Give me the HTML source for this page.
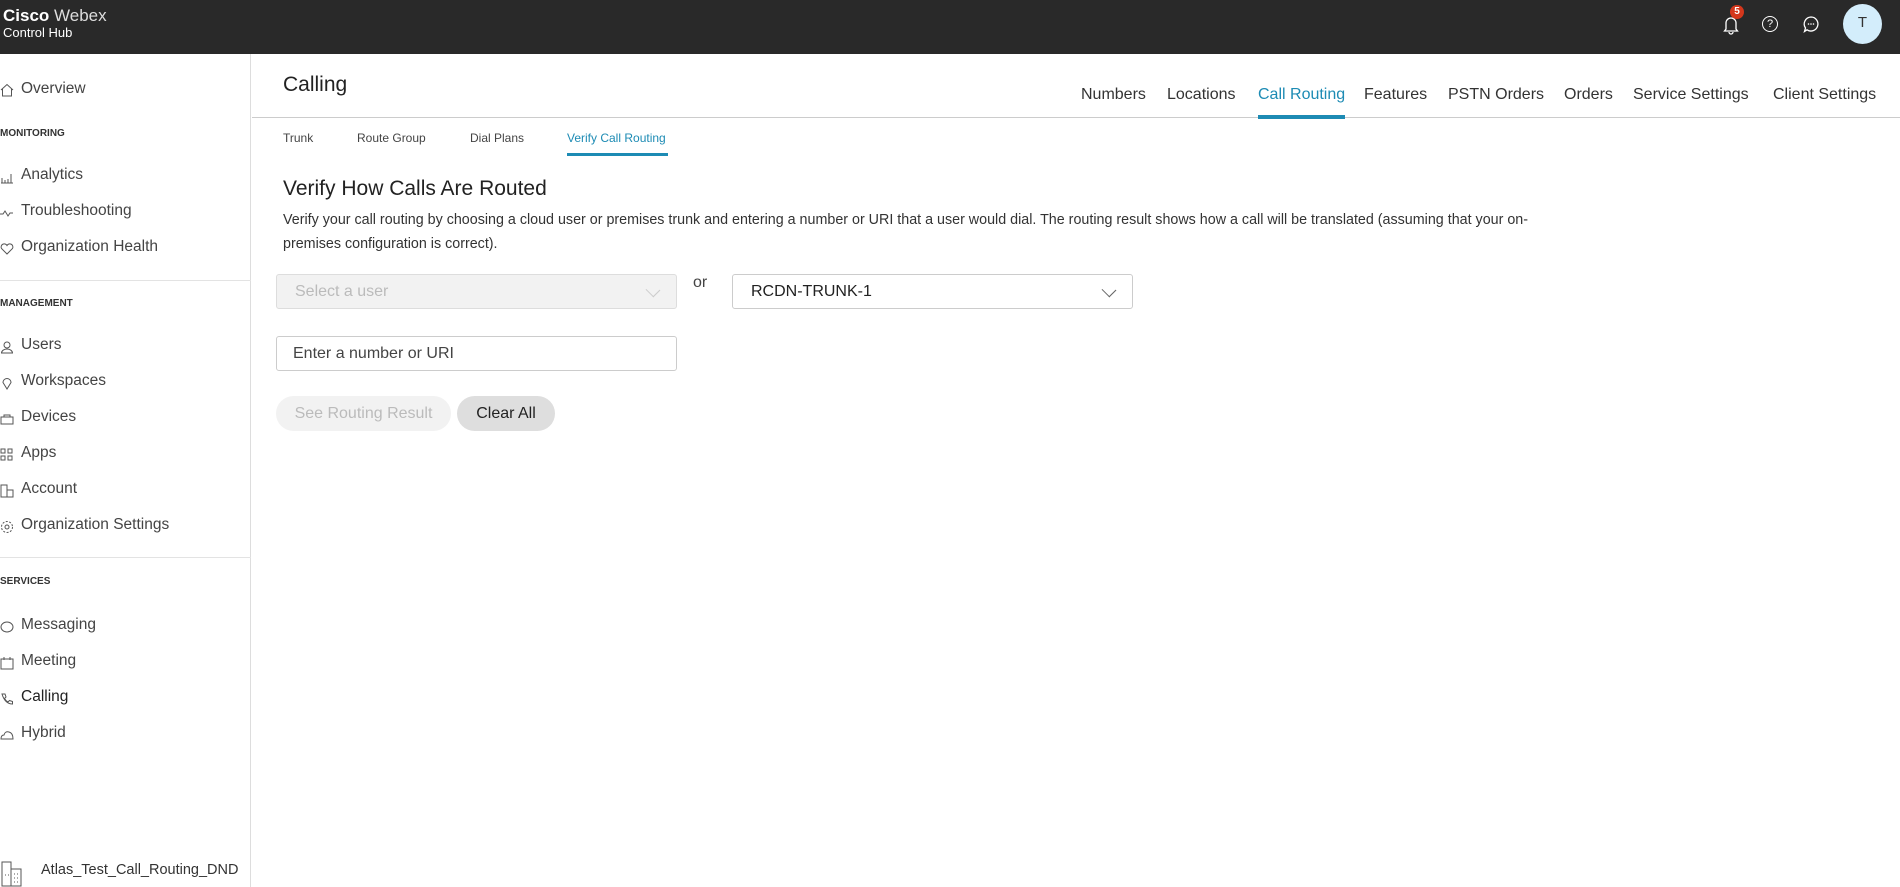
<!DOCTYPE html>
<html><head><meta charset="utf-8"><style>
*{margin:0;padding:0;box-sizing:border-box}
body{width:1900px;height:887px;overflow:hidden;background:#fff;font-family:"Liberation Sans",sans-serif;color:#333;position:relative}
.a{position:absolute;white-space:nowrap}
.hdr{position:absolute;left:0;top:0;width:1900px;height:54px;background:#292929}
.side{position:absolute;left:0;top:54px;width:251px;height:833px;border-right:1px solid #ddd}
.si{position:absolute;left:21px;font-size:15.5px;color:#444}
.ic{position:absolute;left:0;width:14px;height:14px}
.sec{position:absolute;left:0;font-size:10px;font-weight:bold;color:#333}
.hr{position:absolute;left:0;width:251px;border-top:1px solid #e3e3e3}
.nav{position:absolute;top:86px;font-size:16px;color:#333}
.sub{position:absolute;top:131px;font-size:12px;color:#444}
.box{position:absolute;border:1px solid #ccc;border-radius:3px;height:35px}
.chev{position:absolute;right:18px;top:10px;width:10px;height:10px;border-right:1.5px solid #666;border-bottom:1.5px solid #666;transform:rotate(45deg) scaleX(1.1)}
</style></head><body>
<div class="hdr">
 <div class="a" style="left:3px;top:6px;color:#fff;font-size:17px"><b>Cisco</b> <span style="font-weight:300;color:#ddd">Webex</span></div>
 <div class="a" style="left:3px;top:25px;color:#fff;font-size:13px">Control Hub</div>
 <svg class="a" style="left:1722px;top:14px" width="18" height="22" viewBox="0 0 18 22"><path d="M4 15 V9 a5 5 0 0 1 10 0 V15 L15.5 17 H2.5 Z M7 18 a2 2 0 0 0 4 0" fill="none" stroke="#fff" stroke-width="1.3"/></svg>
 <div class="a" style="left:1730px;top:5px;width:14px;height:14px;border-radius:7px;background:#d4371c;color:#fff;font-size:10px;font-weight:bold;text-align:center;line-height:14px">5</div>
 <div class="a" style="left:1762px;top:16px;width:16px;height:16px;border:1.4px solid #fff;border-radius:50%;color:#fff;font-size:11px;text-align:center;line-height:14px">?</div>
 <svg class="a" style="left:1802px;top:15px" width="18" height="19" viewBox="0 0 18 19"><path d="M9 2 a7 7 0 1 1 -4 12.8 L2.5 16.5 L3.5 13 A7 7 0 0 1 9 2 Z" fill="none" stroke="#fff" stroke-width="1.3"/><circle cx="6.5" cy="9" r=".8" fill="#fff"/><circle cx="9" cy="9" r=".8" fill="#fff"/><circle cx="11.5" cy="9" r=".8" fill="#fff"/></svg>
 <div class="a" style="left:1843px;top:4px;width:39px;height:40px;border-radius:50%;background:#d3edfb;color:#333;font-size:15px;text-align:center;line-height:38px">T</div>
</div>
<div class="side">
 <div class="si" style="top:26px">Overview</div>
 <svg class="ic" style="top:29px" viewBox="0 0 14 14"><path d="M1 7 L7 1.5 L13 7 M2.5 6 V13 H11.5 V6" fill="none" stroke="#555"/></svg>
 <div class="sec" style="top:74px">MONITORING</div>
 <div class="si" style="top:112px">Analytics</div>
 <svg class="ic" style="top:116px" viewBox="0 0 14 14"><path d="M1 13 H13 M2 13 V8 M5 13 V10 M8 13 V9 M11 13 V4" fill="none" stroke="#555"/></svg>
 <div class="si" style="top:148px">Troubleshooting</div>
 <svg class="ic" style="top:152px" viewBox="0 0 14 14"><path d="M0 8 L3 8 L5 5 L8 10 L10 7 L13 7" fill="none" stroke="#555"/></svg>
 <div class="si" style="top:184px">Organization Health</div>
 <svg class="ic" style="top:188px" viewBox="0 0 14 14"><path d="M7 12 L1.5 6.5 A3 3 0 0 1 7 3.5 A3 3 0 0 1 12.5 6.5 Z" fill="none" stroke="#555"/></svg>
 <div class="hr" style="top:226px"></div>
 <div class="sec" style="top:244px">MANAGEMENT</div>
 <div class="si" style="top:282px">Users</div>
 <svg class="ic" style="top:286px" viewBox="0 0 14 14"><circle cx="7" cy="5" r="3" fill="none" stroke="#555"/><path d="M1.5 13 A5.5 4 0 0 1 12.5 13 Z" fill="none" stroke="#555"/></svg>
 <div class="si" style="top:318px">Workspaces</div>
 <svg class="ic" style="top:322px" viewBox="0 0 14 14"><path d="M7 13 L3 6.5 A4 4 0 1 1 11 6.5 Z" fill="none" stroke="#555"/></svg>
 <div class="si" style="top:354px">Devices</div>
 <svg class="ic" style="top:358px" viewBox="0 0 14 14"><path d="M1 5 H13 V12 H1 Z M4 5 V3 H10 V5" fill="none" stroke="#555"/></svg>
 <div class="si" style="top:390px">Apps</div>
 <svg class="ic" style="top:394px" viewBox="0 0 14 14"><path d="M1 1 h4 v4 h-4 z M8 1 h4 v4 h-4 z M1 8 h4 v4 h-4 z M8 8 h4 v4 h-4 z" fill="none" stroke="#555"/></svg>
 <div class="si" style="top:426px">Account</div>
 <svg class="ic" style="top:430px" viewBox="0 0 14 14"><path d="M1 1 H7 V13 H1 Z M7 6 H13 V13 H7" fill="none" stroke="#555"/></svg>
 <div class="si" style="top:462px">Organization Settings</div>
 <svg class="ic" style="top:466px" viewBox="0 0 14 14"><circle cx="7" cy="7" r="5.5" fill="none" stroke="#555" stroke-dasharray="2 1.5"/><circle cx="7" cy="7" r="2" fill="none" stroke="#555"/></svg>
 <div class="hr" style="top:503px"></div>
 <div class="sec" style="top:522px">SERVICES</div>
 <div class="si" style="top:562px">Messaging</div>
 <svg class="ic" style="top:566px" viewBox="0 0 14 14"><ellipse cx="7" cy="7" rx="6" ry="5" fill="none" stroke="#555"/></svg>
 <div class="si" style="top:598px">Meeting</div>
 <svg class="ic" style="top:602px" viewBox="0 0 14 14"><path d="M1 3 H13 V13 H1 Z M4 1 V4 M10 1 V4" fill="none" stroke="#555"/></svg>
 <div class="si" style="top:634px;color:#222">Calling</div>
 <svg class="ic" style="top:638px" viewBox="0 0 14 14"><path d="M2 2 L5 2 L6 5 L4.5 6.5 Q6 9 8 10 L9.5 8.5 L12.5 9.5 L12.5 12 Q5 12 2 2 Z" fill="none" stroke="#555"/></svg>
 <div class="si" style="top:670px">Hybrid</div>
 <svg class="ic" style="top:674px" viewBox="0 0 14 14"><path d="M1 11 Q1 7 4 7 Q5 3 9 4 Q13 5 13 11 Z" fill="none" stroke="#555"/></svg>
 <svg class="ic" style="top:807px;width:22px;height:26px" viewBox="0 0 22 26"><path d="M2 1 H11 V25 H2 Z M11 8 H21 V25 H11 M5 14 h1 M8 14 h1 M14 13 h1 M17 13 h1 M14 17 h1 M17 17 h1 M14 21 h1 M17 21 h1" fill="none" stroke="#555"/></svg>
 <div class="si" style="top:808px;left:41px;color:#333;font-size:14.5px">Atlas_Test_Call_Routing_DND</div>
</div>
<div class="a" style="left:283px;top:73px;font-size:21px;color:#222">Calling</div>
<div class="nav" style="left:1081px">Numbers</div>
<div class="nav" style="left:1167px">Locations</div>
<div class="nav" style="left:1258px;color:#1d8bb4">Call Routing</div>
<div class="nav" style="left:1364px">Features</div>
<div class="nav" style="left:1448px">PSTN Orders</div>
<div class="nav" style="left:1564px">Orders</div>
<div class="nav" style="left:1633px">Service Settings</div>
<div class="nav" style="left:1773px">Client Settings</div>
<div class="a" style="left:252px;top:117px;width:1648px;border-top:1px solid #ccc"></div>
<div class="a" style="left:1258px;top:115px;width:87px;height:4px;background:#1d8bb4"></div>
<div class="sub" style="left:283px">Trunk</div>
<div class="sub" style="left:357px">Route Group</div>
<div class="sub" style="left:470px">Dial Plans</div>
<div class="sub" style="left:567px;color:#1d8bb4">Verify Call Routing</div>
<div class="a" style="left:567px;top:153px;width:101px;height:3px;background:#1d8bb4"></div>
<div class="a" style="left:283px;top:177px;font-size:21px;color:#222">Verify How Calls Are Routed</div>
<div class="a" style="left:283px;top:208px;font-size:14.3px;line-height:24px;color:#333">Verify your call routing by choosing a cloud user or premises trunk and entering a number or URI that a user would dial. The routing result shows how a call will be translated (assuming that your on-<br>premises configuration is correct).</div>
<div class="box" style="left:276px;top:274px;width:401px;background:#f2f2f2;border-color:#ddd"><span class="a" style="left:18px;top:8px;font-size:16px;color:#bbb">Select a user</span><div class="chev" style="border-color:#ccc"></div></div>
<div class="a" style="left:693px;top:274px;font-size:16px;color:#444">or</div>
<div class="box" style="left:732px;top:274px;width:401px;background:#fff"><span class="a" style="left:18px;top:8px;font-size:16px;color:#222">RCDN-TRUNK-1</span><div class="chev"></div></div>
<div class="box" style="left:276px;top:336px;width:401px;background:#fff"><span class="a" style="left:16px;top:8px;font-size:16px;color:#444">Enter a number or URI</span></div>
<div class="a" style="left:276px;top:396px;width:175px;height:35px;border-radius:18px;background:#f2f2f2;color:#bbb;font-size:16px;text-align:center;line-height:35px">See Routing Result</div>
<div class="a" style="left:457px;top:396px;width:98px;height:35px;border-radius:18px;background:#dedede;color:#222;font-size:16px;text-align:center;line-height:35px">Clear All</div>
</body></html>
